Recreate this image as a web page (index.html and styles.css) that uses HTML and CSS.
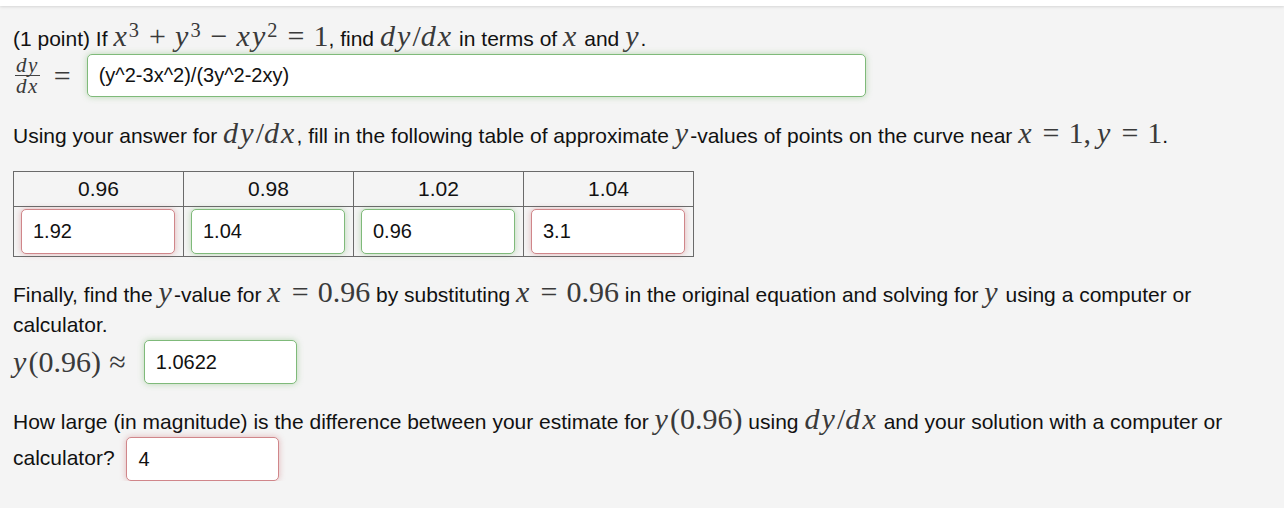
FILE: index.html
```html
<!DOCTYPE html>
<html>
<head>
<meta charset="utf-8">
<link rel="stylesheet" href="styles.css">
</head>
<body>
<div class="topbar"></div>
<div class="content">
  <div class="line l1">(1 point) If <span class="m"><i>x</i><sup>3</sup><span class="op">+</span><i>y</i><sup>3</sup><span class="op">−</span><i>x</i><i>y</i><sup>2</sup><span class="op">=</span>1</span>, find <span class="m"><i>d</i><i>y</i>/<i>d</i><i>x</i></span> in terms of <span class="m"><i>x</i></span> and <span class="m"><i>y</i></span>.</div>
  <div class="ansrow r1">
    <span class="m frac"><span class="num"><i>d</i><i>y</i></span><span class="den"><i>d</i><i>x</i></span></span>
    <span class="m eq">=</span>
    <input class="ans good wide" value="(y^2-3x^2)/(3y^2-2xy)" readonly>
  </div>
  <div class="line l2">Using your answer for <span class="m"><i>d</i><i>y</i>/<i>d</i><i>x</i></span>, fill in the following table of approximate <span class="m"><i>y</i></span>-values of points on the curve near <span class="m"><i>x</i><span class="op">=</span>1,<span class="sp"></span><i>y</i><span class="op">=</span>1</span>.</div>
  <table class="tbl">
    <tr class="hd"><td>0.96</td><td>0.98</td><td>1.02</td><td>1.04</td></tr>
    <tr class="bd">
      <td><input class="ans bad cell" value="1.92" readonly></td>
      <td><input class="ans good cell" value="1.04" readonly></td>
      <td><input class="ans good cell" value="0.96" readonly></td>
      <td><input class="ans bad cell" value="3.1" readonly></td>
    </tr>
  </table>
  <div class="para p3">Finally, find the <span class="m"><i>y</i></span>-value for <span class="m"><i>x</i><span class="op">=</span>0.96</span> by substituting <span class="m"><i>x</i><span class="op">=</span>0.96</span> in the original equation and solving for <span class="m"><i>y</i></span> using a computer or calculator.</div>
  <div class="ansrow r3">
    <span class="m"><i>y</i>(0.96)<span class="op">≈</span></span>
    <input class="ans good small" value="1.0622" readonly>
  </div>
  <div class="para p4">How large (in magnitude) is the difference between your estimate for <span class="m"><i>y</i>(0.96)</span> using <span class="m"><i>d</i><i>y</i>/<i>d</i><i>x</i></span> and your solution with a computer or calculator? <input class="ans bad small inl" value="4" readonly></div>
</div>
</body>
</html>
```
FILE: styles.css
```css
html, body {
  margin: 0;
  padding: 0;
}
body {
  background: #f4f4f4;
  font-family: "Liberation Sans", Arial, sans-serif;
  font-size: 21px;
  color: #111;
}
.topbar {
  height: 6px;
  background: #fff;
  box-shadow: 0 1px 3px rgba(0,0,0,0.12);
}
.content {
  padding: 0 20px 0 13px;
}
.m {
  font-family: "Liberation Serif", "Times New Roman", serif;
  font-size: 30px;
  line-height: 22px;
  color: #3a3a3a;
  white-space: nowrap;
}
.m i {
  font-style: italic;
  letter-spacing: 0.07em;
}
.m sup {
  font-size: 0.68em;
  line-height: 0;
  vertical-align: 0.42em;
  font-style: normal;
  margin-right: 0.05em;
}
.op {
  margin: 0 0.3em;
}
.sp {
  display: inline-block;
  width: 0.2em;
}
.line {
  line-height: 30px;
}
.l1 {
  margin-top: 18px;
}
.ansrow {
  display: flex;
  align-items: center;
}
.r1 {
  margin-top: 0;
  height: 43px;
}
.frac {
  display: inline-flex;
  flex-direction: column;
  align-items: center;
  font-size: 21px;
  line-height: 18px;
  margin-left: 2px;
}
.frac .num {
  border-bottom: 1px solid #444;
  padding: 0 1px 1px;
}
.frac .den {
  padding-top: 1px;
}
.eq {
  margin: 0 16px 0 14px;
}
.ans {
  font-family: "Liberation Sans", Arial, sans-serif;
  font-size: 20px;
  color: #111;
  background: #fff;
  border-radius: 5px;
  box-sizing: border-box;
  height: 44px;
  padding: 0 11px;
  outline: none;
  margin: 0;
}
.good {
  border: 1px solid #7fba7a;
  box-shadow: 0 0 6px rgba(110, 180, 100, 0.45);
}
.bad {
  border: 1px solid #d0868a;
  box-shadow: 0 0 6px rgba(200, 90, 95, 0.4);
}
.wide {
  width: 779px;
  height: 43px;
}
.l2 {
  margin-top: 24px;
}
.tbl {
  margin-top: 20px;
  border-collapse: collapse;
  border: 1px solid #555;
}
.tbl td {
  border: 1px solid #6a6a6a;
  width: 168px;
  padding: 0;
  text-align: center;
}
.tbl .hd td {
  height: 34px;
}
.tbl .bd td {
  height: 49px;
  padding: 2px 8px 2px 7px;
  box-sizing: border-box;
}
.cell {
  width: 154px;
  height: 45px;
  display: block;
}
.para {
  line-height: 30px;
}
.p3 {
  margin-top: 23px;
}
.r3 {
  margin-top: 0;
  height: 44px;
}
.r3 .m {
  margin-right: 18px;
}
.r3 .op {
  margin-right: 0;
  margin-left: 0.28em;
}
.small {
  width: 153px;
  height: 44px;
}
.p4 {
  margin-top: 23px;
  line-height: 30px;
}
.inl {
  vertical-align: middle;
  margin-left: 6px;
}
```
